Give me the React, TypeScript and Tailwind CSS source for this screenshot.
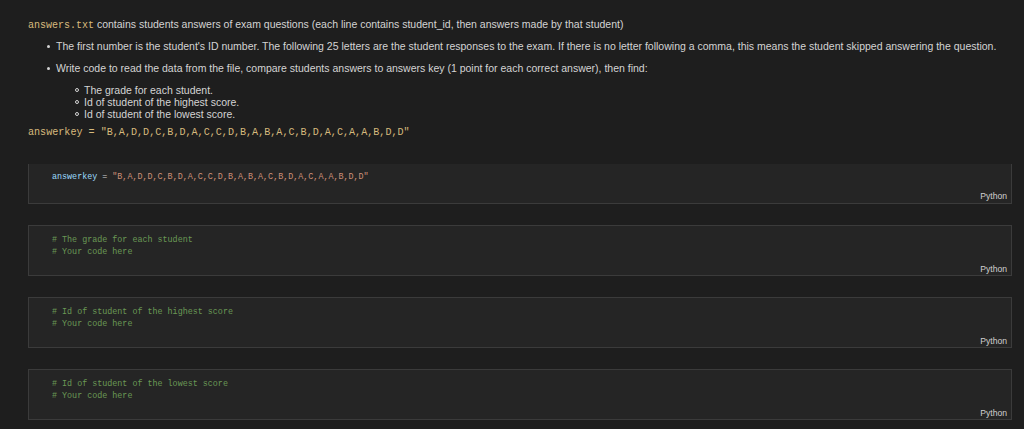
const cells = [
  { lines: [], key: true },
  { lines: ["# The grade for each student", "# Your code here"] },
  { lines: ["# Id of student of the highest score", "# Your code here"] },
  { lines: ["# Id of student of the lowest score", "# Your code here"] },
];

const KEY = "B,A,D,D,C,B,D,A,C,C,D,B,A,B,A,C,B,D,A,C,A,A,B,D,D";

function Cell({ lines, first }: { lines: string[]; first?: boolean }) {
  return (
    <div
      className={
        first
          ? "border-x border-b border-[#3b3b3b] bg-[#252525] pt-[7px] pb-px"
          : "mt-[21px] border border-[#3b3b3b] bg-[#252525] pt-[8px]"
      }
    >
      <div className="pl-[23px] font-['Liberation_Mono',monospace] text-[8.4px] leading-[12px]">
        {first ? (
          <div>
            <span className="text-[#9cdcfe]">answerkey</span>
            <span className="text-[#d4d4d4]"> = </span>
            <span className="text-[#ce9178]">"{KEY}"</span>
          </div>
        ) : (
          lines.map((l) => (
            <div key={l} className="text-[#6a9955]">
              {l}
            </div>
          ))
        )}
      </div>
      <div
        className={
          (first ? "mt-[7px]" : "mt-[5px]") +
          " pr-[4px] text-right font-['Liberation_Sans',sans-serif] text-[8.6px] leading-[12px] text-[#d0d0d0]"
        }
      >
        Python
      </div>
    </div>
  );
}

export default function App() {
  return (
    <div className="min-h-[429px] bg-[#1e1e1e] pl-[28px] pr-[12px] pt-[18px] font-['Liberation_Sans',sans-serif] text-[10.5px] text-[#d4d4d4]">
      <p className="leading-[12px]">
        <span className="font-['Liberation_Mono',monospace] text-[10px] text-[#d7ba7d]">answers.txt</span> contains
        students answers of exam questions (each line contains student_id, then answers made by that
        student)
      </p>

      <ul className="mt-[8px]">
        <li className="flex items-center leading-[12px]">
          <span className="ml-[19px] mr-[6px] h-[3px] w-[3px] shrink-0 rounded-full bg-[#d4d4d4]" />
          The first number is the student's ID number. The following 25 letters are the student
          responses to the exam. If there is no letter following a comma, this means the student
          skipped answering the question.
        </li>
        <li className="mt-[10px] flex items-center leading-[12px]">
          <span className="ml-[19px] mr-[6px] h-[3px] w-[3px] shrink-0 rounded-full bg-[#d4d4d4]" />
          Write code to read the data from the file, compare students answers to answers key (1 point
          for each correct answer), then find:
        </li>
      </ul>

      <ul className="mt-[10px]">
        {[
          "The grade for each student.",
          "Id of student of the highest score.",
          "Id of student of the lowest score.",
        ].map((t) => (
          <li key={t} className="flex items-center leading-[12px]">
            <span className="ml-[47px] mr-[5px] h-[4px] w-[4px] shrink-0 rounded-full border border-[#d4d4d4]" />
            {t}
          </li>
        ))}
      </ul>

      <div className="mt-[7px] font-['Liberation_Mono',monospace] text-[10.1px] leading-[12px] text-[#d7ba7d]">
        answerkey = "{KEY}"
      </div>

      <div className="mt-[25px] pb-[8px]">
        {cells.map((c, i) => (
          <Cell key={i} lines={c.lines} first={i === 0} />
        ))}
      </div>
    </div>
  );
}
